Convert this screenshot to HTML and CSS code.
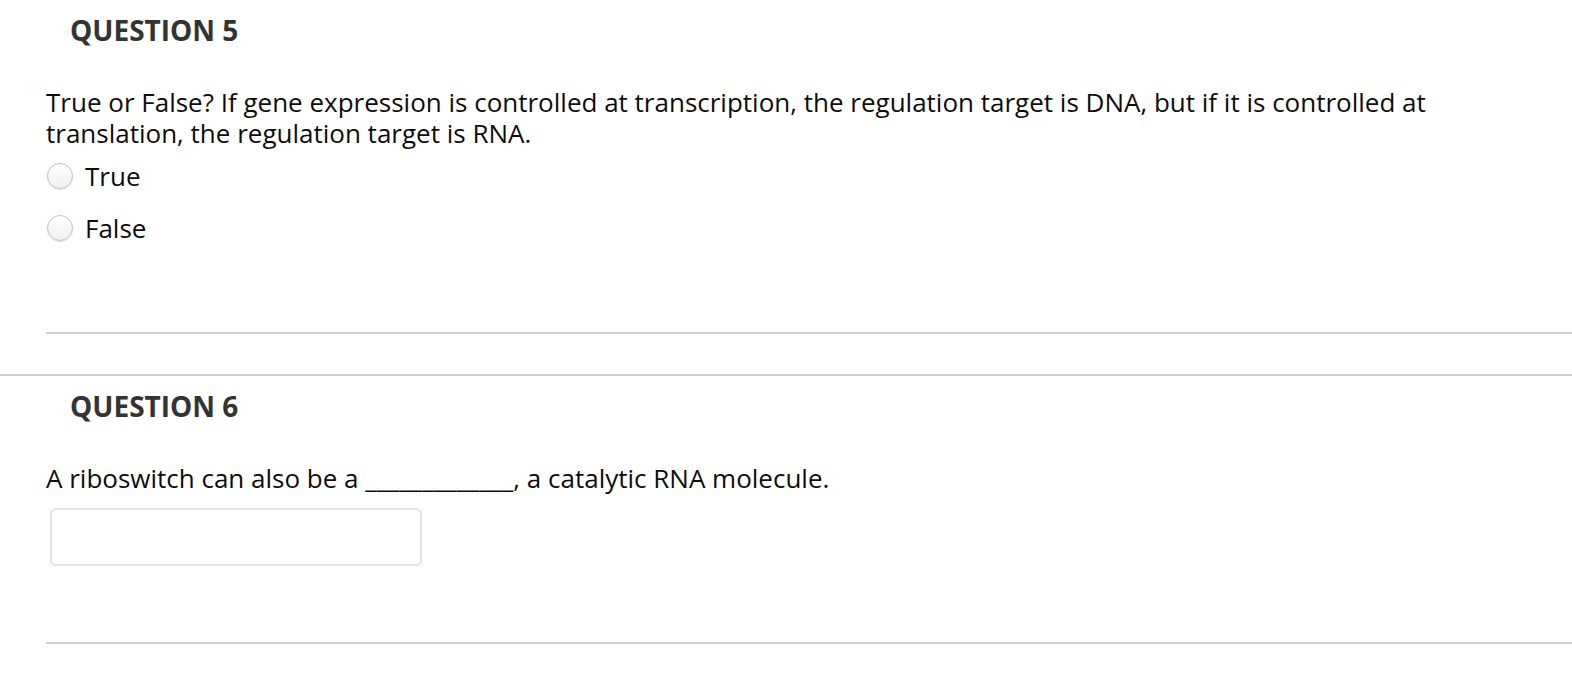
FILE: index.html
```html
<!DOCTYPE html>
<html>
<head>
<meta charset="utf-8">
<link rel="stylesheet" href="styles.css">
</head>
<body>
<div class="question first">
  <h2 class="q-title">QUESTION 5</h2>
  <div class="q-body">
    <p class="q-text">True or False? If gene expression is controlled at transcription, the regulation target is DNA, but if it is controlled at translation, the regulation target is RNA.</p>
    <ul class="options">
      <li class="option"><span class="radio"></span><span class="label">True</span></li>
      <li class="option"><span class="radio"></span><span class="label">False</span></li>
    </ul>
  </div>
</div>
<div class="question">
  <h2 class="q-title">QUESTION 6</h2>
  <div class="q-body">
    <p class="q-text">A riboswitch can also be a _____________, a catalytic RNA molecule.</p>
    <div class="answer-box"></div>
  </div>
</div>
</body>
</html>
```
FILE: styles.css
```css
html, body {
  margin: 0;
  padding: 0;
  background: #ffffff;
}
body {
  font-family: "Open Sans", "Liberation Sans", sans-serif;
  color: #0d0d0d;
}
.question {
  padding-top: 12px;
  padding-bottom: 40px;
  border-top: 2px solid #cfcfcf;
}
.question.first {
  border-top: none;
}
.q-title {
  margin: 0 0 0 46px;
  padding-left: 24px;
  font-size: 28px;
  line-height: 36px;
  font-weight: 700;
  color: #333333;
}
.q-body {
  margin-left: 46px;
  padding-top: 39px;
  border-bottom: 2px solid #cfcfcf;
}
.first .q-body {
  padding-bottom: 86px;
}
.question:not(.first) .q-body {
  padding-bottom: 76px;
}
.q-text {
  margin: 0;
  max-width: 1440px;
  font-size: 26px;
  line-height: 31px;
  color: #0d0d0d;
}
.options {
  list-style: none;
  margin: 9px 0 0 0;
  padding: 0;
  display: flex;
  flex-direction: column;
  gap: 16px;
}
.option {
  display: flex;
  align-items: center;
  height: 36px;
  padding-left: 1px;
}
.radio {
  width: 24px;
  height: 24px;
  border-radius: 50%;
  border: 1px solid #c2c2c2;
  background: linear-gradient(#ffffff, #f0f0f0);
  box-shadow: 0 1px 1px rgba(0,0,0,0.12);
  flex: none;
}
.label {
  margin-left: 12px;
  font-size: 26px;
  color: #0d0d0d;
}
.answer-box {
  margin: 14px 0 0 4px;
  width: 368px;
  height: 54px;
  border: 2px solid #e3e3e3;
  border-radius: 6px;
}
```
